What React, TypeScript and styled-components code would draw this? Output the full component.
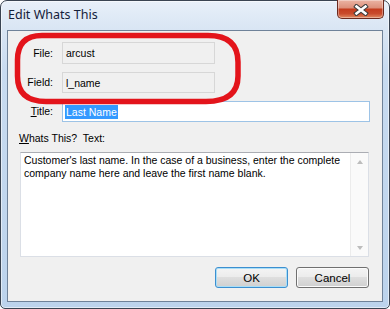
import styled, { createGlobalStyle } from 'styled-components';

const GlobalStyle = createGlobalStyle`
  html, body {
    margin: 0;
    padding: 0;
  }
  body {
    width: 390px;
    height: 309px;
    overflow: hidden;
    background: #ffffff;
  }
`;

const Window = styled.div`
  position: relative;
  box-sizing: border-box;
  width: 390px;
  height: 309px;
  display: flex;
  flex-direction: column;
  padding: 0 6px 6px;
  border: 1px solid #3a4452;
  border-radius: 7px 7px 5px 5px;
  background: linear-gradient(180deg, #e8f0f9 0px, #dae6f4 26px, #c8dbf0 70px, #bcd3ec 100%);
  box-shadow: inset 0 0 0 1px rgba(255, 255, 255, 0.55);
  font-family: 'Liberation Sans', Arial, sans-serif;
  color: #000;
`;

const TitleBar = styled.div`
  height: 29px;
  display: flex;
  justify-content: space-between;
  align-items: flex-start;
  padding-left: 1px;
`;

const TitleText = styled.div`
  padding-top: 6px;
  font-family: 'Noto Sans', 'Open Sans', sans-serif;
  font-size: 12.5px;
  line-height: 16px;
  color: #14213a;
`;

const CloseButton = styled.div`
  box-sizing: border-box;
  width: 47px;
  height: 19px;
  margin: -1px -1px 0 0;
  display: flex;
  align-items: center;
  justify-content: center;
  padding-top: 1px;
  border: 1px solid #6b2a1f;
  border-top: none;
  border-radius: 0 0 5px 5px;
  background: linear-gradient(180deg, #ebb4a4 0%, #dd917c 42%, #c43d1f 52%, #c94b2c 76%, #e08b62 100%);
  box-shadow: inset 0 0 0 1px rgba(255, 255, 255, 0.35);
`;

const Client = styled.div`
  flex: 1;
  display: flex;
  flex-direction: column;
  padding: 11px 12px 13px 0;
  border: 1px solid #6f8299;
  background: #f0f0f0;
  font-size: 10.5px;
`;

const FieldGrid = styled.div`
  display: grid;
  grid-template-columns: 45px 1fr;
  grid-template-rows: 22px 21px 21px;
  column-gap: 9px;
  row-gap: 8px;
`;

const Label = styled.div`
  display: flex;
  align-items: center;
  justify-content: flex-end;
  line-height: 13px;
`;

const ReadOnlyBox = styled.div`
  box-sizing: border-box;
  width: 153px;
  display: flex;
  align-items: center;
  padding-left: 3px;
  border: 1px solid #d7d7d7;
  background: #f0f0f0;
`;

const TitleInput = styled.div`
  box-sizing: border-box;
  display: flex;
  align-items: center;
  padding-left: 2px;
  border: 1px solid #9dc3e6;
  background: #ffffff;
`;

const Selected = styled.span`
  line-height: 14px;
  padding: 0 1px;
  background: #3399ff;
  color: #ffffff;
`;

const SectionLabel = styled.div`
  margin: 10px 0 0 11px;
  line-height: 13px;
  white-space: pre;
`;

const TextArea = styled.div`
  box-sizing: border-box;
  width: 349px;
  height: 105px;
  margin: 7px 0 0 12px;
  display: flex;
  border: 1px solid #dbdfe6;
  border-top-color: #abadb3;
  background: #ffffff;
`;

const TextBody = styled.div`
  flex: 1;
  padding: 1px 4px 0 3px;
  line-height: 13px;
`;

const ScrollBar = styled.div`
  width: 17px;
  display: flex;
  flex-direction: column;
  justify-content: space-between;
  border-left: 1px solid #ececec;
  background: #fafafa;
`;

const ScrollArrow = styled.div<{ $dir: 'up' | 'down' }>`
  height: 17px;
  display: flex;
  align-items: center;
  justify-content: center;

  &::after {
    content: '';
    width: 0;
    height: 0;
    border-left: 3.5px solid transparent;
    border-right: 3.5px solid transparent;
    ${(p) =>
      p.$dir === 'up'
        ? 'border-bottom: 4px solid #bdbdbd;'
        : 'border-top: 4px solid #bdbdbd;'}
  }
`;

const ButtonRow = styled.div`
  margin-top: 10px;
  padding-right: 1px;
  display: flex;
  justify-content: flex-end;
  gap: 8px;
`;

const Button = styled.div<{ $default?: boolean }>`
  box-sizing: border-box;
  width: 73px;
  height: 21px;
  display: flex;
  align-items: center;
  justify-content: center;
  font-size: 11.5px;
  border: 1px solid ${(p) => (p.$default ? '#3c8fd0' : '#707070')};
  border-radius: 3px;
  background: linear-gradient(180deg, #f4f4f4 0%, #ececec 45%, #dedede 50%, #d0d0d0 100%);
  box-shadow: inset 0 0 0 1px ${(p) => (p.$default ? '#a9def7' : '#fbfbfb')};
`;

const RedMarker = styled.svg`
  position: absolute;
  left: 13px;
  top: 31px;
  pointer-events: none;
`;

export default function App() {
  return (
    <>
      <GlobalStyle />
      <Window>
        <TitleBar>
          <TitleText>Edit Whats This</TitleText>
          <CloseButton>
            <svg width="16" height="12" viewBox="0 0 16 12">
              <path d="M3.5 2.5 L12.5 9.5 M12.5 2.5 L3.5 9.5" stroke="#3c3c3c" strokeWidth="4.6" strokeLinecap="square" />
              <path d="M3.5 2.5 L12.5 9.5 M12.5 2.5 L3.5 9.5" stroke="#ffffff" strokeWidth="2.6" strokeLinecap="square" />
            </svg>
          </CloseButton>
        </TitleBar>
        <Client>
          <FieldGrid>
            <Label>File:</Label>
            <ReadOnlyBox>arcust</ReadOnlyBox>
            <Label>Field:</Label>
            <ReadOnlyBox>l_name</ReadOnlyBox>
            <Label>
              <span>
                <u>T</u>itle:
              </span>
            </Label>
            <TitleInput>
              <Selected>Last Name</Selected>
            </TitleInput>
          </FieldGrid>
          <SectionLabel>
            <u>W</u>hats This?  Text:
          </SectionLabel>
          <TextArea>
            <TextBody>
              Customer's last name. In the case of a business, enter the complete company name here and
              leave the first name blank.
            </TextBody>
            <ScrollBar>
              <ScrollArrow $dir="up" />
              <ScrollArrow $dir="down" />
            </ScrollBar>
          </TextArea>
          <ButtonRow>
            <Button $default>OK</Button>
            <Button>Cancel</Button>
          </ButtonRow>
        </Client>
        <RedMarker width="230" height="76" viewBox="0 0 230 76">
          <path
            d="M28 3.5 H194 Q224 3.5 224 30 V44 Q224 69.5 192 69.5 H32 Q3.5 69.5 3.5 44 V28 Q3.5 3.5 28 3.5 Z"
            fill="none"
            stroke="#e3141b"
            strokeWidth="5.5"
          />
        </RedMarker>
      </Window>
    </>
  );
}
